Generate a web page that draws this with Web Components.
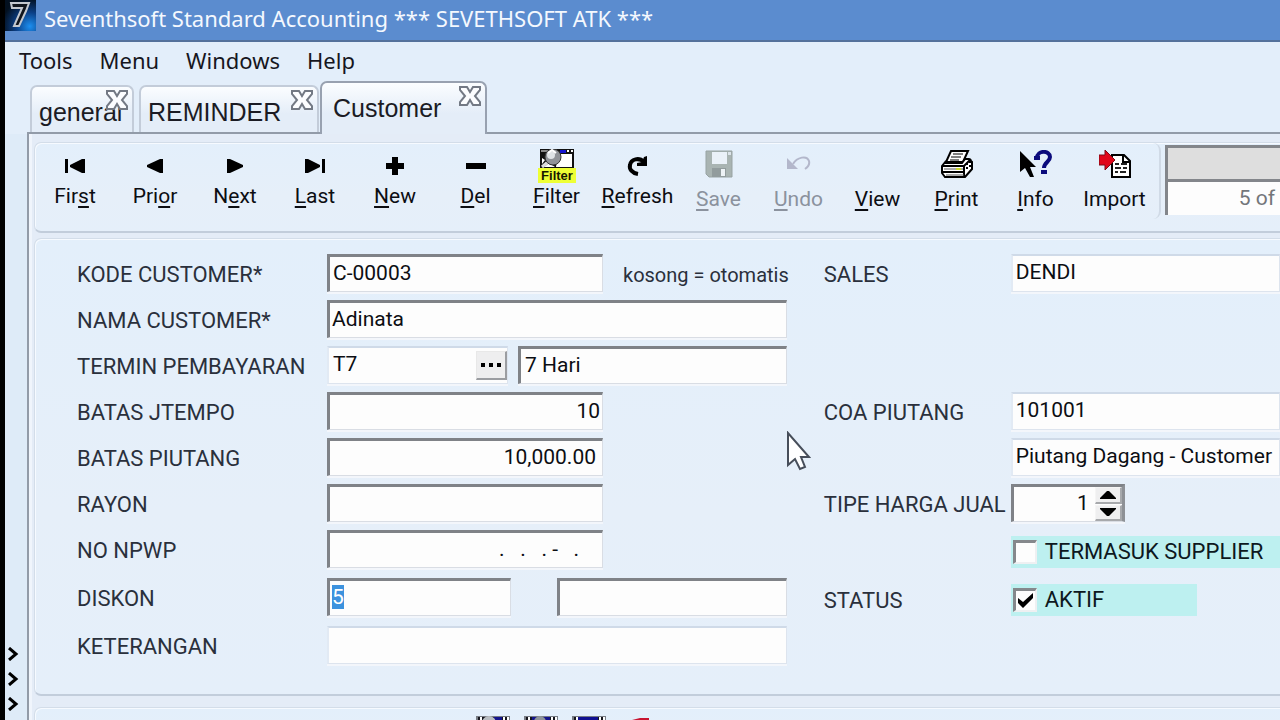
<!DOCTYPE html>
<html lang="id">
<head>
<meta charset="utf-8">
<meta name="viewport" content="width=device-width, initial-scale=1">
<title>Seventhsoft Standard Accounting</title>
<style>
  html, body {
    margin: 0;
    height: 100%;
    overflow: hidden;
    background: #000;
  }
  body {
    --ui: Roboto, "Liberation Sans", sans-serif;
    --ui-size: 21px;
    --segoe: "Noto Sans", "Open Sans", sans-serif;
    font: 21px/30px var(--ui);
    color: #10141c;
  }
</style>
</head>
<body>
<app-window>
  <title-bar slot="title">Seventhsoft Standard Accounting *** SEVETHSOFT ATK ***</title-bar>
  <menu-bar slot="menu">
    <a href="#tools">Tools</a>
    <a href="#menu">Menu</a>
    <a href="#windows">Windows</a>
    <a href="#help">Help</a>
  </menu-bar>
  <tab-strip slot="tabs">
    <tab-item label="general" style="--w: 104px"></tab-item>
    <tab-item label="REMINDER" style="--w: 180px"></tab-item>
    <tab-item label="Customer" style="--w: 167px" active></tab-item>
  </tab-strip>
  <side-rail slot="rail"></side-rail>

  <group-panel>
    <tool-bar>
      <tool-group style="--w: 80px">
        <tool-button icon="first" label="Fir&amp;st"></tool-button>
        <tool-button icon="prior" label="Pri&amp;or"></tool-button>
        <tool-button icon="next" label="N&amp;ext"></tool-button>
        <tool-button icon="last" label="&amp;Last"></tool-button>
        <tool-button icon="new" label="&amp;New"></tool-button>
      </tool-group>
      <tool-group style="--w: 81px">
        <tool-button icon="del" label="&amp;Del"></tool-button>
        <tool-button icon="filter" label="&amp;Filter"></tool-button>
        <tool-button icon="refresh" label="&amp;Refresh"></tool-button>
        <tool-button icon="save" label="&amp;Save" large disabled></tool-button>
      </tool-group>
      <tool-group style="--w: 79px">
        <tool-button icon="undo" label="&amp;Undo" large disabled></tool-button>
        <tool-button icon="none" label="&amp;View" large></tool-button>
        <tool-button icon="print" label="&amp;Print" large></tool-button>
        <tool-button icon="info" label="&amp;Info" large></tool-button>
        <tool-button icon="import" label="Import" large></tool-button>
      </tool-group>
      <record-counter slot="end">5 of</record-counter>
    </tool-bar>
  </group-panel>

  <group-panel style="--after: 11px">
    <form-layout>
      <form-column style="--label: 250px">
        <form-field label="KODE CUSTOMER*" value="C-00003" style="--w: 276px; --inset: 3px">
          <span>kosong = otomatis</span>
        </form-field>
        <form-field label="NAMA CUSTOMER*" value="Adinata" style="--w: 460px"></form-field>
        <form-field label="TERMIN PEMBAYARAN" value="T7" kind="flat" lookup style="--w: 181px; --inset: 4px; --gap: 10px">
          <text-box name="Nama termin" value="7 Hari" style="--w: 269px; --inset: 4px"></text-box>
        </form-field>
        <form-field label="BATAS JTEMPO" value="10" style="--w: 276px; --align: right"></form-field>
        <form-field label="BATAS PIUTANG" value="10,000.00" style="--w: 276px; --align: right; --inset: 6px"></form-field>
        <form-field label="RAYON" value="" style="--w: 276px"></form-field>
        <form-field label="NO NPWP" value=".   .   . -   .    " style="--w: 276px; --align: right"></form-field>
        <form-field label="DISKON" value="5" selected style="--w: 184px; --gap: 46px">
          <text-box name="Diskon nominal" value="" style="--w: 230px"></text-box>
        </form-field>
        <form-field label="KETERANGAN" value="" kind="flat" style="--w: 460px"></form-field>
      </form-column>
      <form-column style="--label: 187px" wide>
        <form-field label="SALES" value="DENDI" kind="flat" style="grid-row: 1; --w: 100%; --inset: 3px"></form-field>
        <form-field label="COA PIUTANG" value="101001" kind="flat" style="grid-row: 4; --w: 100%; --inset: 3px"></form-field>
        <form-field label="" name="Nama akun piutang" value="Piutang Dagang - Customer" kind="flat" style="grid-row: 5; --w: 100%; --inset: 3px"></form-field>
        <spin-field label="TIPE HARGA JUAL" value="1" style="grid-row: 6"></spin-field>
        <check-field text="TERMASUK SUPPLIER" style="grid-row: 7; --w: 100%"></check-field>
        <check-field label="STATUS" text="AKTIF" checked style="grid-row: 8; --w: 184px"></check-field>
      </form-column>
    </form-layout>
  </group-panel>

  <group-panel>
    <detail-bar></detail-bar>
  </group-panel>
  <mouse-pointer slot="pointer"></mouse-pointer>
</app-window>

<script>
const svg = (w, h, body, extra = "") =>
  `<svg width="${w}" height="${h}" viewBox="0 0 ${w} ${h}" aria-hidden="true" ${extra}>${body}</svg>`;

const ICONS = {
  none: "",
  first: svg(20, 14, `<path d="M0 0h3v14H0zM20 0v14h-3L5 8V6L17 0z"/>`),
  prior: svg(16, 14, `<path d="M16 0v14h-3L0 8V6L13 0z"/>`),
  next: svg(16, 14, `<path d="M0 0v14h3L16 8V6L3 0z"/>`),
  last: svg(20, 14, `<path d="M0 0v14h3L15 8V6L3 0zM17 0h3v14h-3z"/>`),
  new: svg(18, 18, `<path d="M6 0h6v6h6v6h-6v6H6v-6H0V6h6z"/>`),
  del: svg(20, 6, `<path d="M0 0h20v6H0z"/>`),
  filter: svg(38, 34, `
    <path d="M2 0h34v20H2z" fill="#111"/>
    <path d="M3 1h7v2H3z" fill="#888"/><path d="M22 1h6v3h-6z" fill="#1414d0"/>
    <path d="M29 1h2v2h-2zM33 1h2v2h-2z" fill="#fff"/>
    <path d="M20 5h14v13H18z" fill="#fff"/><path d="M4 9l3 2-3 4zM6 18l5-4 6 4z" fill="#fff"/>
    <path d="M4 18l7-6" stroke="#ddd" stroke-width="3"/>
    <circle cx="15" cy="8" r="8" fill="#909398" stroke="#333" stroke-width="1"/>
    <circle cx="13" cy="6" r="4" fill="#dfe3e6"/>
    <path d="M10 4l4-3 4 3" stroke="#fff" stroke-width="2" fill="none"/>
    <path d="M0 19h38v15H0z" fill="#eeff35"/>
    <text x="19" y="31" text-anchor="middle" font-family="Liberation Sans, sans-serif" font-weight="700" font-size="13" fill="#181800">Filter</text>`),
  refresh: svg(22, 20, `
    <path d="M11 18C5 17 2 13 3 9c1-6 9-8 14-3" fill="none" stroke="#000" stroke-width="4"/>
    <path d="M20 0v10H10V7l5-1 2-5z"/>`),
  save: svg(28, 28, `
    <path d="M1 1h26v26H4l-3-3z" fill="#a9b4b2"/><path d="M1 1h26v26H4l-3-3z" fill="none" stroke="#98a3a3"/>
    <path d="M7 2h15v12H7z" fill="#eaf1f8"/><path d="M23 2h3v3h-3z" fill="#dce4ea"/>
    <path d="M7 18h14v9H7z" fill="#929c9d"/><path d="M16 19h4v7h-4z" fill="#eef3f6"/>`),
  undo: svg(24, 18, `
    <path d="M0 3v11h11z" fill="#b3b7cb"/>
    <path d="M6 9C10 2 20 0 22 6c1 4-1 6-4 8" fill="none" stroke="#b3b7cb" stroke-width="2"/>`),
  print: svg(32, 28, `
    <path d="M10 1h17l-5 11H5z" fill="#fff" stroke="#000" stroke-width="2"/>
    <path d="M12 4h10M10 7h10M9 10h9" stroke="#000" stroke-width="1"/>
    <path d="M5 11L1 16v7l3 4h20l7-8v-7l-3-3h-4l-3 4H4z" fill="#fff" stroke="#000" stroke-width="2"/>
    <path d="M1 16h22l7-7M23 16v10M2 22h21" fill="none" stroke="#000" stroke-width="2"/>
    <path d="M26 13v8M29 11v7M27 8v4" stroke="#000" stroke-width="2" stroke-dasharray="2 2"/>
    <path d="M3 19h19M5 25h18" stroke="#555"/><path d="M15 18h5v2h-5z" fill="#c9d62a"/>`),
  info: svg(32, 28, `
    <path d="M0 1v21l5-4 5 9h4l-4-10h6z"/>
    <path d="M17 8c0-8 13-8 13-1 0 5-6 5-6 11" fill="none" stroke="#0b0b7c" stroke-width="4"/>
    <path d="M14 6h6v4h-6zM21 20h6v4h-6z" fill="#0b0b7c"/>`),
  import: svg(32, 30, `
    <path d="M13 6h12l6 6v16H13z" fill="#fff" stroke="#000" stroke-width="2"/>
    <path d="M24 6v7h7" fill="none" stroke="#000" stroke-width="2"/>
    <path d="M16 15h4m2 0h6M16 19h6m2 0h4M16 23h3m2 0h6" stroke="#222" stroke-width="2"/>
    <path d="M0 6h6V1l10 10L6 21v-5H0z" fill="#e0061a" stroke="#7c0b16"/>`),
  close: svg(22, 20, `
    <path d="M1 1h7l3 5 3-5h7v3l-5 6 5 6v3h-7l-3-5-3 5H1v-3l5-6-5-6z" fill="#fcfdff" stroke="#737984" stroke-width="2"/>`),
  chevron: svg(12, 14, `<path d="M2 1l7 6-7 6" fill="none" stroke="#000" stroke-width="3"/>`),
};

class BaseElement extends HTMLElement {
  connectedCallback() {
    if (this.shadowRoot) return;
    this.attachShadow({ mode: "open" });
    this.shadowRoot.innerHTML = this.render();
    this.ready();
  }

  attr(name) {
    return this.getAttribute(name) || "";
  }

  ready() {}
}

class AppWindow extends BaseElement {
  render() {
    return `
      <style>
        :host {
          display: flex;
          flex-direction: column;
          height: 100%;
          margin-left: 5px;
          overflow: hidden;
          background: #e3eefa;
        }
        .body {
          display: flex;
          flex: 1;
          min-height: 0;
        }
        main {
          display: flex;
          flex-direction: column;
          flex: 1;
          min-width: 0;
          padding: 8px 0 0 5px;
          background: #e4ecf7;
          border-left: 2px solid #929ba8;
          box-shadow: inset 3px 0 #f0f5fc;
        }
      </style>
      <slot name="title"></slot>
      <slot name="menu"></slot>
      <slot name="tabs"></slot>
      <div class="body">
        <slot name="rail"></slot>
        <main><slot></slot></main>
      </div>
      <slot name="pointer"></slot>`;
  }
}

class TitleBar extends BaseElement {
  render() {
    const logo = svg(31, 31, `
      <defs><radialGradient id="g" cx="80%" cy="85%" r="90%">
        <stop offset="0" stop-color="#1c8ff0"/><stop offset=".5" stop-color="#0b3f86"/><stop offset="1" stop-color="#03101f"/>
      </radialGradient></defs>
      <path d="M0 0h31v31H0z" fill="url(#g)"/>
      <path d="M6 3h18l-3 8-7 15H9l8-18H7z" fill="#10151d" stroke="#c3c8cf" stroke-width="2"/>`);
    return `
      <style>
        :host {
          display: flex;
          align-items: flex-start;
          height: 40px;
          flex: none;
          gap: 8px;
          background: #5b8ccf;
          border-bottom: 2px solid #54719b;
          color: #f4f8fe;
          font: 22px/36px var(--segoe);
          white-space: nowrap;
        }
        svg { display: block; flex: none; }
      </style>
      ${logo}<span><slot></slot></span>`;
  }
}

class MenuBar extends BaseElement {
  render() {
    return `
      <style>
        :host { display: block; flex: none; }
        nav {
          display: flex;
          gap: 27px;
          padding: 0 14px 2px;
          font: 22px/36px var(--segoe);
        }
        ::slotted(a) { color: #16161e; text-decoration: none; }
      </style>
      <nav><slot></slot></nav>`;
  }
}

class TabStrip extends BaseElement {
  render() {
    return `
      <style>
        :host {
          display: flex;
          align-items: flex-end;
          flex: none;
          height: 52px;
          margin-left: 22px;
          padding-left: 3px;
          gap: 5px;
          border-bottom: 2px solid #929ba8;
        }
      </style>
      <slot></slot>`;
  }
}

class TabItem extends BaseElement {
  render() {
    return `
      <style>
        :host {
          display: block;
          position: relative;
          box-sizing: border-box;
          width: var(--w);
          height: 47px;
          border: 2px solid #c3ccd9;
          border-bottom: 0;
          border-radius: 7px 7px 0 0;
          background: linear-gradient(#fbfdff, #e4edf8 60%);
        }
        :host([active]) {
          height: 53px;
          margin: 0 0 -2px -4px;
          border-color: #98a1b0;
        }
        button {
          font: 25px/44px "Liberation Sans", sans-serif;
          color: #1b1b24;
          background: none;
          border: 0;
          padding: 3px 0 0 7px;
          white-space: nowrap;
        }
        :host([active]) button { padding: 3px 0 0 11px; }
        .close {
          position: absolute;
          top: 3px;
          right: 4px;
          padding: 0;
          line-height: 0;
        }
        :host([active]) .close { padding: 0; }
      </style>
      <button role="tab">${this.attr("label")}</button>
      <button class="close" aria-label="Tutup">${ICONS.close}</button>`;
  }
}

class SideRail extends BaseElement {
  render() {
    return `
      <style>
        :host {
          display: flex;
          flex-direction: column;
          justify-content: flex-end;
          flex: none;
          width: 22px;
          padding-bottom: 4px;
          box-sizing: border-box;
          background: #deebf8;
        }
        button {
          height: 25px;
          padding: 0 0 0 2px;
          border: 0;
          background: none;
          line-height: 0;
          text-align: left;
        }
      </style>
      ${`<button aria-label="Buka panel">${ICONS.chevron}</button>`.repeat(3)}`;
  }
}

class GroupPanel extends BaseElement {
  render() {
    return `
      <style>
        :host {
          display: block;
          flex: none;
          margin-bottom: var(--after, 5px);
          background: linear-gradient(#e3effb, #e6eff9 60%, #e5effa);
          border: 1px solid #d3dde9;
          border-right: 0;
          border-bottom: 2px solid #c2cddb;
          border-radius: 7px 0 0 7px;
          box-shadow: inset 1px 1px #f6faff;
        }
      </style>
      <slot></slot>`;
  }
}

class ToolBar extends BaseElement {
  render() {
    return `
      <style>
        :host { display: flex; height: 88px; }
        .tools {
          display: flex;
          flex: none;
          height: 76px;
          padding-right: 5px;
          border-right: 2px solid #d0dae6;
          border-radius: 0 8px 8px 0;
        }
      </style>
      <div class="tools"><slot></slot></div>
      <slot name="end"></slot>`;
  }
}

class ToolGroup extends BaseElement {
  render() {
    return `
      <style>:host { display: flex; }</style>
      <slot></slot>`;
  }
}

class ToolButton extends BaseElement {
  render() {
    const label = this.attr("label").replace(/&(.)/, "<u>$1</u>");
    return `
      <style>
        :host { display: block; width: var(--w); }
        button {
          display: flex;
          flex-direction: column;
          align-items: center;
          width: 100%;
          padding: 7px 0 0;
          border: 0;
          background: none;
          color: #0c0d12;
          font: var(--ui-size)/28px var(--ui);
        }
        .icon {
          display: flex;
          align-items: center;
          justify-content: center;
          height: 32px;
        }
        :host([large]) .icon { height: 28px; padding-bottom: 7px; }
        :host([disabled]) button { color: #8b929e; }
        u { text-decoration-thickness: 2px; text-underline-offset: 3px; text-decoration-skip-ink: none; }
      </style>
      <button ${this.hasAttribute("disabled") ? "disabled" : ""}>
        <span class="icon">${ICONS[this.attr("icon")]}</span>
        <span>${label}</span>
      </button>`;
  }
}

class RecordCounter extends BaseElement {
  render() {
    return `
      <style>
        :host {
          display: flex;
          flex-direction: column;
          flex: 1;
          height: 70px;
          margin: 2px 0 0 4px;
          box-sizing: border-box;
          border: 3px solid #83868b;
          border-width: 3px 0 0 3px;
          background: #fdfdfd;
        }
        .track { height: 31px; background: #dedede; border-bottom: 3px solid #83868b; }
        .text { padding-right: 5px; text-align: right; color: #73767a; line-height: 32px; white-space: nowrap; }
      </style>
      <div class="track"></div>
      <div class="text"><slot></slot></div>`;
  }
}

class FormLayout extends BaseElement {
  render() {
    return `
      <style>:host { display: flex; gap: 35px; padding: 15px 0 30px 42px; }</style>
      <slot></slot>`;
  }
}

class FormColumn extends BaseElement {
  render() {
    return `
      <style>
        :host {
          display: grid;
          grid-template-rows: repeat(7, 38px) 40px 40px;
          row-gap: 8px;
          align-items: end;
          flex: none;
        }
        :host([wide]) { flex: 1; }
      </style>
      <slot></slot>`;
  }
}

const FIELD_STYLE = `
  :host { display: flex; align-items: center; height: 38px; }
  .label {
    flex: none;
    width: var(--label);
    color: #2a303c;
    font-size: 22px;
    line-height: 38px;
    padding-top: 3px;
    white-space: nowrap;
  }
  ::slotted(*) { margin-left: var(--gap, 20px); color: #2a303c; white-space: nowrap; }
  ::slotted(span) { font-size: 20px; padding-top: 4px; }
`;

const BOX_STYLE = `
  .box {
    position: relative;
    display: flex;
    flex: none;
    box-sizing: border-box;
    width: var(--w);
    height: 38px;
    border: 1px solid #d9dde4;
    border-top: 3px solid #7f8287;
    border-left: 3px solid #7f8287;
    background: #fdfdfd;
    box-shadow: 0 2px #f3f6fb;
  }
  .box.flat { border: 1px solid #dde4ee; border-top: 2px solid #cfdae8; border-left: 2px solid #e2eaf4; flex: 1 1 auto; max-width: var(--w); }
  input {
    flex: 1;
    min-width: 0;
    width: 100%;
    box-sizing: border-box;
    height: 32px;
    padding: 0 var(--inset, 2px);
    border: 0;
    outline: 0;
    background: none;
    color: #0c0e13;
    font: var(--ui-size)/30px var(--ui);
    text-align: var(--align, left);
  }
  ::selection { background: #3c92de; color: #fff; }
`;

class FormField extends BaseElement {
  render() {
    const lookup = this.hasAttribute("lookup")
      ? `<button class="lookup" aria-label="Cari"><i></i><i></i><i></i></button>` : "";
    const name = this.attr("name");
    return `
      <style>
        ${FIELD_STYLE}
        ${BOX_STYLE}
        .lookup {
          display: flex;
          align-items: center;
          justify-content: center;
          gap: 4px;
          flex: none;
          width: 31px;
          height: 29px;
          margin: 3px 0 0;
          padding: 0;
          border: 1px solid #e8e8e8;
          border-right: 2px solid #9b9da1;
          border-bottom: 2px solid #9b9da1;
          background: #eeeeef;
        }
        .lookup i { width: 4px; height: 4px; background: #000; }
      </style>
      <label class="label" for="field">${this.attr("label")}</label>
      <div class="box ${this.attr("kind")}">
        <input id="field" type="text" value="${this.attr("value")}" ${name ? `aria-label="${name}"` : ""}>
        ${lookup}
      </div>
      <slot></slot>`;
  }

  ready() {
    if (!this.hasAttribute("selected")) return;
    const input = this.shadowRoot.querySelector("input");
    input.focus();
    input.select();
  }
}

class TextBox extends BaseElement {
  render() {
    return `
      <style>:host { display: block; }${BOX_STYLE}</style>
      <div class="box"><input type="text" aria-label="${this.attr("name")}" value="${this.attr("value")}"></div>`;
  }
}

class SpinField extends BaseElement {
  render() {
    return `
      <style>
        ${FIELD_STYLE}
        ${BOX_STYLE}
        .box { width: 114px; border-right: 3px solid #8e9196; }
        input { text-align: right; padding-right: 6px; }
        .spin { display: flex; flex-direction: column; width: 27px; gap: 1px; }
        .spin button {
          flex: 1;
          padding: 0;
          border: 1px solid #f5f5f5;
          border-right: 2px solid #a7a9ac;
          border-bottom: 2px solid #a7a9ac;
          background: #efeff0;
          line-height: 0;
        }
      </style>
      <label class="label" for="field">${this.attr("label")}</label>
      <div class="box">
        <input id="field" type="text" inputmode="numeric" value="${this.attr("value")}">
        <div class="spin">
          <button data-step="1" aria-label="Naik">${svg(16, 8, `<path d="M7 0h2l7 7v1H0V7z"/>`)}</button>
          <button data-step="-1" aria-label="Turun">${svg(16, 8, `<path d="M7 8h2l7-7V0H0v1z"/>`)}</button>
        </div>
      </div>`;
  }

  ready() {
    const input = this.shadowRoot.querySelector("input");
    this.shadowRoot.querySelectorAll("button").forEach((button) => {
      button.addEventListener("click", () => {
        input.value = Number(input.value) + Number(button.dataset.step);
      });
    });
  }
}

class CheckField extends BaseElement {
  render() {
    return `
      <style>
        ${FIELD_STYLE}
        .check {
          display: flex;
          align-items: center;
          gap: 8px;
          flex: 0 1 var(--w);
          height: 32px;
          margin-top: 6px;
          padding-left: 2px;
          background: #bdf0f0;
          color: #0d1820;
          font-size: 22px;
          white-space: nowrap;
          overflow: hidden;
        }
        .label { padding-top: 7px; }
        input {
          appearance: none;
          flex: none;
          box-sizing: border-box;
          width: 24px;
          height: 24px;
          margin: 0;
          border: 3px solid #85888c;
          border-right: 2px solid #eef0f2;
          border-bottom: 2px solid #eef0f2;
          background: #fdfdfd center / 15px 15px no-repeat;
        }
        input:checked {
          background-image: url("data:image/svg+xml,%3Csvg xmlns='http://www.w3.org/2000/svg' viewBox='0 0 15 15'%3E%3Cpath d='M0 5v5l5 5L15 5V0L5 9z'/%3E%3C/svg%3E");
        }
      </style>
      <span class="label">${this.attr("label")}</span>
      <label class="check">
        <input type="checkbox" ${this.hasAttribute("checked") ? "checked" : ""}>
        ${this.attr("text")}
      </label>`;
  }
}

class DetailBar extends BaseElement {
  render() {
    const film = (inner) => svg(34, 28, `
      <path d="M0 0h34v28H0z" fill="#777c84"/><path d="M2 1h30v26H2z" fill="#15151c"/>
      <path d="M4 1h2v3H4zM27 1h2v3h-2zM31 1h2v3h-2z" fill="#fff"/>${inner}`);
    return `
      <style>
        :host { display: flex; gap: 14px; height: 60px; padding: 8px 0 0 441px; }
        button { padding: 0; border: 0; background: none; line-height: 0; align-self: flex-start; }
      </style>
      <button aria-label="Filter">${film(`<path d="M18 1h8v6h-8z" fill="#14148c"/><circle cx="13" cy="7" r="7" fill="#b9bdc2"/>`)}</button>
      <button aria-label="Cari">${film(`<path d="M8 1h18v6H8z" fill="#14148c"/><circle cx="16" cy="6" r="6" fill="#8f949a"/>`)}</button>
      <button aria-label="Daftar">${film(`<path d="M6 1h20v8H6z" fill="#101090"/>`)}</button>
      <button aria-label="Hapus">${svg(34, 28, `<path d="M20 2h9v10H12V4z" fill="#c81430"/>`)}</button>`;
  }
}

class MousePointer extends BaseElement {
  render() {
    return `
      <style>
        :host { position: absolute; left: 786px; top: 431px; line-height: 0; pointer-events: none; }
      </style>
      ${svg(25, 40, `<path d="M2 2v32l7-6 5 10 5-2-4-10h8z" fill="#fff" stroke="#474e5a" stroke-width="2"/>`)}`;
  }
}

customElements.define("app-window", AppWindow);
customElements.define("title-bar", TitleBar);
customElements.define("menu-bar", MenuBar);
customElements.define("tab-strip", TabStrip);
customElements.define("tab-item", TabItem);
customElements.define("side-rail", SideRail);
customElements.define("group-panel", GroupPanel);
customElements.define("tool-bar", ToolBar);
customElements.define("tool-group", ToolGroup);
customElements.define("tool-button", ToolButton);
customElements.define("record-counter", RecordCounter);
customElements.define("form-layout", FormLayout);
customElements.define("form-column", FormColumn);
customElements.define("form-field", FormField);
customElements.define("text-box", TextBox);
customElements.define("spin-field", SpinField);
customElements.define("check-field", CheckField);
customElements.define("detail-bar", DetailBar);
customElements.define("mouse-pointer", MousePointer);
</script>
</body>
</html>
